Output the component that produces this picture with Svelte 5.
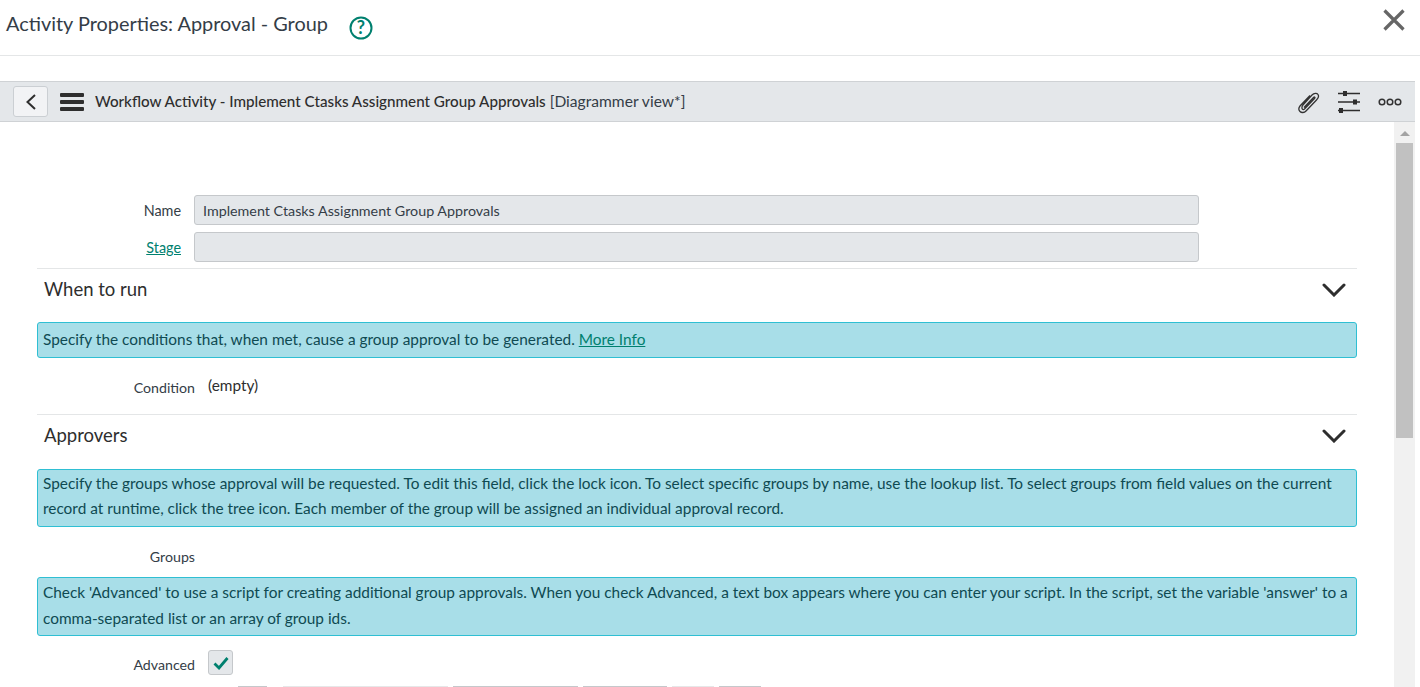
<script>
    const rows = [
        { label: "Name", value: "Implement Ctasks Assignment Group Approvals" },
        { label: "Stage", value: "", link: true },
    ];
    // tops of the next row's controls, only their first pixel row is on screen
    const stubs = [
        { w: 29, gap: 0, dark: true },
        { w: 41, gap: 16 },
        { w: 41, gap: 0 },
        { w: 40, gap: 0 },
        { w: 43, gap: 0 },
        { w: 125, gap: 5, dark: true },
        { w: 84, gap: 5, dark: true },
        { w: 42, gap: 5 },
        { w: 42, gap: 5, dark: true },
    ];
</script>

<header class="modal-head">
    <h1>Activity Properties: Approval - Group</h1>
    <svg class="help" viewBox="0 0 24 24" width="24" height="24">
        <circle cx="12" cy="12" r="10.5" fill="none" stroke="#00806f" stroke-width="2" />
        <text x="12" y="18" text-anchor="middle" class="q">?</text>
    </svg>
    <svg class="close" viewBox="0 0 24 24" width="24" height="24">
        <path d="M2.500 2.500 L21.500 21.500 M21.500 2.500 L2.500 21.500" stroke="#666" stroke-width="3.200" fill="none" />
    </svg>
</header>

<div class="toolbar">
    <button class="back" aria-label="Back">
        <svg viewBox="0 0 12 16" width="12" height="16">
            <path d="M10 1 L2.500 8 L10 15" stroke="#2e2e2e" stroke-width="2" fill="none" />
        </svg>
    </button>
    <div class="burger"><span></span><span></span><span></span></div>
    <div class="title"><strong>Workflow Activity - Implement Ctasks Assignment Group Approvals</strong> <span class="view">[Diagrammer view*]</span></div>
    <div class="tools">
        <svg viewBox="0 0 24 24" width="24" height="24">
            <path
                d="M6.500 15.500 L16 5 C18 3 21 3 22 4.500 C23.300 6.500 22 8.500 20.500 10 L10 21 C8.300 22.800 5.500 23 4 21.500 C2.500 20 2.500 18 4 16 L14 5.500 M8 17.500 L17.500 7.500 C18.500 6.500 19.500 7.500 18.500 8.500 L8.500 19 C7 20.500 5 18.800 6.500 15.500"
                fill="none"
                stroke="#333"
                stroke-width="1.300"
            />
        </svg>
        <svg viewBox="0 0 24 24" width="24" height="24">
            <path d="M1 3.500 H23 M1 12 H23 M1 20.500 H23" stroke="#2e2e2e" stroke-width="1.600" />
            <rect x="6" y="1" width="4" height="5" fill="#2e2e2e" />
            <rect x="16" y="9.500" width="4" height="5" fill="#2e2e2e" />
            <rect x="2" y="18" width="4" height="5" fill="#2e2e2e" />
        </svg>
        <svg viewBox="0 0 24 8" width="24" height="8">
            <circle cx="4" cy="4" r="2.800" fill="none" stroke="#333" stroke-width="1.500" />
            <circle cx="12" cy="4" r="2.800" fill="none" stroke="#333" stroke-width="1.500" />
            <circle cx="20" cy="4" r="2.800" fill="none" stroke="#333" stroke-width="1.500" />
        </svg>
    </div>
</div>

<div class="scroller">
    <main class="form">
        {#each rows as row}
            <div class="row">
                <label class:link={row.link}>{row.label}</label>
                <div class="readonly">{row.value}</div>
            </div>
        {/each}

        <section class="sect first">
            <h2>When to run</h2>
            <svg viewBox="0 0 24 14" width="24" height="14">
                <path d="M2 2 L12 12 L22 2" stroke="#2e2e2e" stroke-width="3" fill="none" stroke-linecap="round" />
            </svg>
        </section>
        <div class="info one">Specify the conditions that, when met, cause a group approval to be generated. <a href="#top">More Info</a></div>
        <div class="plain condition"><span class="lbl">Condition</span><span class="val">(empty)</span></div>

        <section class="sect">
            <h2>Approvers</h2>
            <svg viewBox="0 0 24 14" width="24" height="14">
                <path d="M2 2 L12 12 L22 2" stroke="#2e2e2e" stroke-width="3" fill="none" stroke-linecap="round" />
            </svg>
        </section>
        <div class="info two">Specify the groups whose approval will be requested. To edit this field, click the lock icon. To select specific groups by name, use the lookup list. To select groups from field values on the current record at runtime, click the tree icon. Each member of the group will be assigned an individual approval record.</div>
        <div class="plain groups"><span class="lbl">Groups</span></div>
        <div class="info three">Check 'Advanced' to use a script for creating additional group approvals. When you check Advanced, a text box appears where you can enter your script. In the script, set the variable 'answer' to a comma-separated list or an array of group ids.</div>
        <div class="plain advanced">
            <span class="lbl">Advanced</span>
            <span class="check">
                <svg viewBox="0 0 16 14" width="16" height="14">
                    <path d="M1.500 7.500 L6 12 L14.500 2" stroke="#00806f" stroke-width="2.800" fill="none" />
                </svg>
            </span>
        </div>
        <div class="stubs">
            {#each stubs as s}
                <i class:dark={s.dark} style="width: {s.w}px; margin-left: {s.gap}px"></i>
            {/each}
        </div>
    </main>
    <div class="scrollbar">
        <div class="arrow"></div>
        <div class="thumb"></div>
    </div>
</div>

<style>
    :global(body) {
        margin: 0;
        background: #fff;
        color: #2e2e2e;
        font-family: "Lato", "Open Sans", sans-serif;
        overflow: hidden;
        height: 687px;
    }
    .modal-head {
        height: 55px;
        border-bottom: 1px solid #e4e6e7;
        display: flex;
        align-items: flex-start;
        padding-left: 6px;
    }
    h1 {
        margin: 10px 0 0;
        font-size: 19.900px;
        line-height: 27px;
        font-weight: 400;
        color: #343d47;
    }
    .help {
        margin: 16px 0 0 21px;
    }
    .q {
        font-size: 18px;
        font-weight: 700;
        fill: #00806f;
    }
    .close {
        margin: 8px 14px 0 auto;
    }
    .toolbar {
        margin-top: 25px;
        height: 39px;
        background: #e4e7ea;
        border-top: 1px solid #cfd2d5;
        border-bottom: 1px solid #cfd2d5;
        margin-right: 5px;
        display: flex;
        align-items: center;
        padding-left: 13px;
    }
    .back {
        width: 35px;
        height: 31px;
        background: #f2f3f5;
        border: 1px solid #cbcfd3;
        border-radius: 3px;
        padding: 0;
        display: flex;
        align-items: center;
        justify-content: center;
    }
    .burger {
        margin-left: 12px;
        display: flex;
        flex-direction: column;
        gap: 3px;
        width: 24px;
    }
    .burger span {
        height: 4px;
        background: #2e2e2e;
        border-radius: 1px;
    }
    .title {
        margin: -1px 0 0 11px;
        font-size: 15.200px;
        color: #343d47;
    }
    .title strong {
        font-weight: 500;
        color: #2e2e2e;
    }
    .view {
        font-size: 15.600px;
    }
    .tools {
        margin-left: auto;
        display: flex;
        align-items: center;
        gap: 17px;
        padding-right: 13px;
    }
    .scroller {
        display: flex;
        height: 566px;
        overflow: hidden;
        padding-right: 5px;
    }
    .form {
        flex: 1;
        padding: 73px 0 0 37px;
        margin-right: 37px;
        font-size: 15.400px;
        min-width: 0;
    }
    .row {
        display: flex;
        align-items: center;
        height: 30px;
        margin-bottom: 7px;
    }
    .row label {
        width: 144px;
        text-align: right;
        font-size: 14.400px;
        color: #343d47;
    }
    .row label.link {
        color: #00806f;
        text-decoration: underline;
    }
    .readonly {
        margin-left: 13px;
        width: 1005px;
        height: 30px;
        box-sizing: border-box;
        background: #e4e7ea;
        border: 1px solid #c5c8cb;
        border-radius: 3px;
        padding: 0 8px;
        font-size: 14.300px;
        line-height: 29px;
        color: #343d47;
    }
    .sect {
        border-top: 1px solid #e4e6e7;
        display: flex;
        justify-content: space-between;
        align-items: center;
        height: 41px;
        padding: 0 11px 0 7px;
    }
    .sect.first {
        margin-top: -1px;
    }
    h2 {
        margin: 0 0 2px;
        font-size: 18.500px;
        font-weight: 400;
        color: #2e2e2e;
    }
    .info {
        box-sizing: border-box;
        background: #a8dee8;
        border: 1px solid #2fbfd3;
        border-radius: 3px;
        padding: 3px 5px 5px;
        color: #0f4a52;
    }
    .info a {
        color: #00806f;
    }
    .one {
        margin-top: 12px;
        line-height: 26px;
    }
    .two {
        margin-top: 13px;
        line-height: 25px;
        padding: 1px 5px 5px;
    }
    .three {
        line-height: 25.500px;
        padding: 2px 5px 4px;
    }
    .plain {
        display: flex;
        align-items: center;
    }
    .lbl {
        width: 158px;
        text-align: right;
        font-size: 14.200px;
        color: #343d47;
    }
    .condition {
        height: 56px;
    }
    .condition .lbl {
        margin-top: 2px;
    }
    .val {
        margin-left: 13px;
        margin-top: -3px;
    }
    .groups {
        height: 50px;
        box-sizing: border-box;
        padding-top: 8px;
    }
    .advanced {
        margin-top: 14px;
        height: 25px;
    }
    .advanced .lbl {
        margin-top: 3px;
    }
    .check {
        margin-left: 13px;
        width: 25px;
        height: 25px;
        box-sizing: border-box;
        background: #e4e7ea;
        border: 1px solid #c5c8cb;
        border-radius: 3px;
        display: flex;
        align-items: center;
        justify-content: center;
    }
    .stubs {
        margin: 11px 0 0 201px;
        display: flex;
    }
    .stubs i {
        height: 5px;
        background: #f2f3f5;
        border-top: 1px solid #e6e7e8;
    }
    .stubs i.dark {
        border-top-color: #c5c8cb;
    }
    .scrollbar {
        width: 21px;
        flex: none;
        background: #f1f1f1;
        box-sizing: border-box;
        padding: 0 2px;
    }
    .arrow {
        margin: 9px auto 0;
        width: 0;
        height: 0;
        border-left: 5px solid transparent;
        border-right: 5px solid transparent;
        border-bottom: 5px solid #a3a3a3;
    }
    .thumb {
        margin-top: 7px;
        height: 295px;
        background: #c1c1c1;
    }
</style>
